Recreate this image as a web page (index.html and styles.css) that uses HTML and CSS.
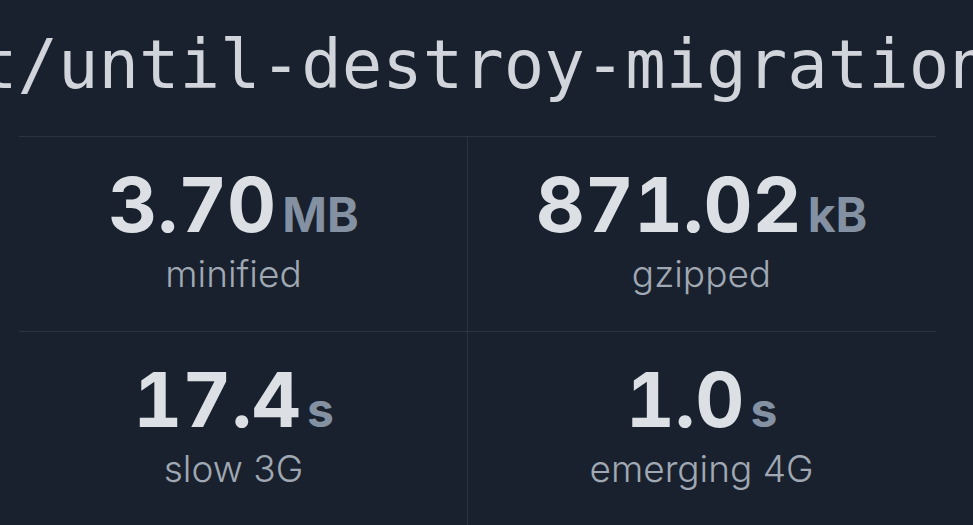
FILE: index.html
```html
<!DOCTYPE html>
<html lang="en">
<head>
<meta charset="utf-8">
<title>Bundle size</title>
<link rel="stylesheet" href="styles.css">
</head>
<body>
<div class="page">
  <h1 class="pkg-title"><span class="pkg-name">t/until-destroy-migration</span></h1>
  <div class="stats">
    <div class="stat stat-left">
      <div class="stat-value">3.70<span class="stat-unit">MB</span></div>
      <div class="stat-label">minified</div>
    </div>
    <div class="stat stat-right">
      <div class="stat-value">871.02<span class="stat-unit">kB</span></div>
      <div class="stat-label">gzipped</div>
    </div>
    <div class="stat stat-left">
      <div class="stat-value">17.4<span class="stat-unit">s</span></div>
      <div class="stat-label">slow 3G</div>
    </div>
    <div class="stat stat-right">
      <div class="stat-value">1.0<span class="stat-unit">s</span></div>
      <div class="stat-label">emerging 4G</div>
    </div>
  </div>
</div>
</body>
</html>
```
FILE: styles.css
```css
html, body {
  margin: 0;
  padding: 0;
  background: #18212d;
  height: 100%;
  overflow: hidden;
}

.page {
  width: 973px;
  overflow: hidden;
}

.pkg-title {
  margin: 0 0 31px 0;
  padding-top: 25px;
  height: 80px;
  font-family: "DejaVu Sans Mono", monospace;
  font-weight: 400;
  font-size: 67.3px;
  line-height: 80px;
  color: #d1d5db;
  white-space: nowrap;
  overflow: hidden;
}

.pkg-name {
  display: inline-block;
  margin-left: -23px;
}

.stats {
  width: 936px;
  display: grid;
  grid-template-columns: 468px 468px;
}

.stat {
  display: flex;
  flex-direction: column;
  align-items: center;
  height: 195px;
  box-sizing: border-box;
  border-top: 1px solid #2b3542;
  padding-top: 29px;
  font-family: Inter, "Noto Sans", sans-serif;
}

.stat-left {
  margin-left: 19px;
  padding-right: 19px;
  border-right: 1px solid #2b3542;
}

.stat-right {
  margin-left: -1px;
}

.stat-value {
  font-size: 76px;
  font-weight: 700;
  line-height: 76px;
  color: #dcdfe4;
  font-variant-numeric: tabular-nums;
  letter-spacing: 0;
  white-space: nowrap;
}

.stat-unit {
  font-size: 48px;
  font-weight: 700;
  color: #8491a3;
  margin-left: 6px;
}

.stat-label {
  margin-top: 2px;
  font-size: 37px;
  font-weight: 300;
  line-height: 37px;
  color: #a0a8b3;
  letter-spacing: 0;
  white-space: nowrap;
}
```
